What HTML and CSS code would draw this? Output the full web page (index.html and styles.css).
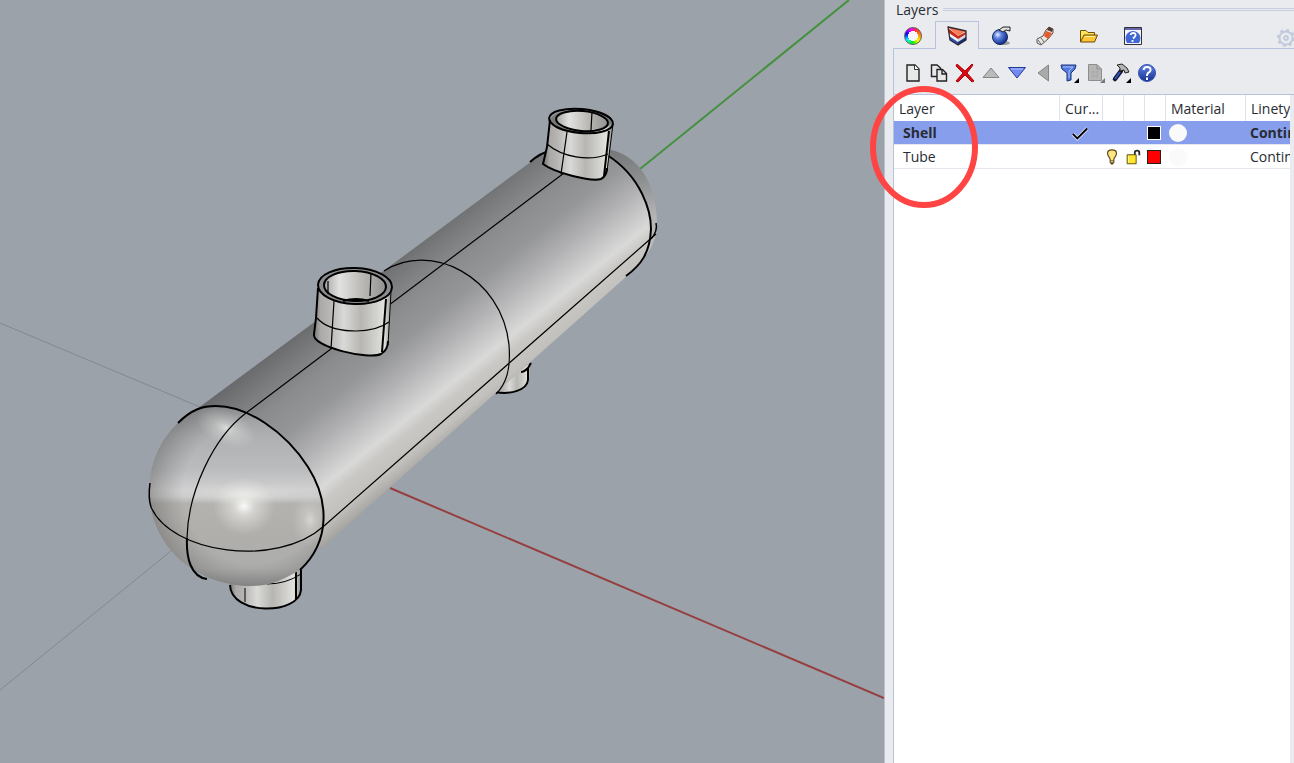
FILE: index.html
```html
<!DOCTYPE html>
<html lang="en">
<head>
<meta charset="utf-8">
<meta name="viewport" content="width=device-width, initial-scale=1">
<title>Layers</title>
<link rel="stylesheet" href="styles.css">
</head>
<body>
<main class="app">
  <section class="viewport" aria-label="Perspective viewport">
    <svg class="scene" viewBox="0 0 884 763" preserveAspectRatio="xMidYMid slice" role="img" aria-label="Shell with four nozzles">
      <defs>
        <linearGradient id="body" gradientUnits="userSpaceOnUse" x1="0" y1="568" x2="117" y2="714">
          <stop offset="0" stop-color="#68696b"/><stop offset=".1" stop-color="#77787a"/>
          <stop offset=".25" stop-color="#8b8c8e"/><stop offset=".4" stop-color="#959698"/>
          <stop offset=".55" stop-color="#b1b1b3"/><stop offset=".66" stop-color="#c8c8c9"/>
          <stop offset=".74" stop-color="#d9d9d8"/><stop offset=".8" stop-color="#c9c8c5"/>
          <stop offset=".9" stop-color="#c1c0bc"/><stop offset="1" stop-color="#a09f9c"/>
        </linearGradient>
        <linearGradient id="dome" x1="0" y1="0" x2="0" y2="1">
          <stop offset="0" stop-color="#97989a"/><stop offset=".16" stop-color="#aeafb1"/>
          <stop offset=".35" stop-color="#bbbcbe"/><stop offset=".46" stop-color="#cfcfd0"/>
          <stop offset=".5" stop-color="#cbcbca"/><stop offset=".54" stop-color="#b3b2af"/>
          <stop offset=".7" stop-color="#b0afac"/><stop offset=".9" stop-color="#adadac"/>
          <stop offset="1" stop-color="#949495"/>
        </linearGradient>
        <radialGradient id="edge" cx=".58" cy=".48" r=".6">
          <stop offset=".65" stop-color="#555" stop-opacity="0"/><stop offset="1" stop-color="#444" stop-opacity=".4"/>
        </radialGradient>
        <radialGradient id="glow">
          <stop offset="0" stop-color="#fff" stop-opacity=".95"/><stop offset=".35" stop-color="#f4f4f0" stop-opacity=".5"/>
          <stop offset="1" stop-color="#eee" stop-opacity="0"/>
        </radialGradient>
        <linearGradient id="farcap" gradientUnits="userSpaceOnUse" x1="625" y1="150" x2="645" y2="245">
          <stop offset="0" stop-color="#77797b"/><stop offset=".35" stop-color="#8f9092"/>
          <stop offset=".7" stop-color="#b2b2b3"/><stop offset="1" stop-color="#bdbdbb"/>
        </linearGradient>
        <linearGradient id="pipe">
          <stop offset="0" stop-color="#777779"/><stop offset=".08" stop-color="#aaa9a7"/>
          <stop offset=".2" stop-color="#b7b6b4"/><stop offset=".38" stop-color="#d9d9d7"/>
          <stop offset=".6" stop-color="#b7b6b2"/><stop offset=".8" stop-color="#d2d2cf"/>
          <stop offset=".9" stop-color="#e2e2df"/><stop offset="1" stop-color="#8b8b89"/>
        </linearGradient>
        <linearGradient id="bore">
          <stop offset="0" stop-color="#a6a5a3"/><stop offset=".25" stop-color="#e2e2e0"/>
          <stop offset=".6" stop-color="#bcbbb7"/><stop offset="1" stop-color="#929292"/>
        </linearGradient>
        <clipPath id="domeclip"><path d="M178 423C192 409 203 406 216 406C247 406 285 431 308 467C329 500 331 541 300 570C275 584 267 586 245 586C187 582 149 540 149 490C150 462 160 440 178 423Z"/></clipPath>
      </defs>
      <rect width="884" height="763" fill="#9ca2aa"/>
      <g fill="none">
        <path d="M0 323L200 407M0 690L171 551" stroke="#85878d"/>
        <path d="M390 488L884 698" stroke="#963f40" stroke-width="2"/>
        <path d="M640 169L849 0" stroke="#44913f" stroke-width="2"/>
      </g>
      <!-- lower nozzles -->
      <path d="M496 385L531 363L529 379Q528 391 512 393Q503 394 496 391Z" fill="url(#pipe)"/>
      <path d="M531 363L528 368L528 380C527 390 511 395 495 392M528 368Q524 372 521 372" fill="none" stroke="#000" stroke-width="2"/>
      <path d="M230 582L231 590C236 613 295 614 301 591L301 570Z" fill="url(#pipe)"/>
      <path d="M230 585C231 616 299 615 301 590V570M296 572V600" fill="none" stroke="#000" stroke-width="2"/>
      <path d="M245 588V602M267 584Q286 584 301 574" fill="none" stroke="#000"/>
      <!-- far head and cylindrical body -->
      <path d="M608 149C648 157 657 198 657 225C657 239 649 257 628 275L590 250Z" fill="url(#farcap)"/>
      <path d="M178 423L532 161C548 147 565 145 605 153C630 168 650 202 652 231C651 252 642 265 628 275L322 548L240 520Z" fill="url(#body)"/>
      <g fill="none" stroke="#000">
        <path d="M246 413L564 173M324 526L656 234M384 271C430 241 502 276 509 345C511 370 506 384 496 394" stroke-width="1.200"/>
        <path d="M530 162Q540 153 552 150M607 155C642 177 651 212 651 229C650 253 641 265 626 276" stroke-width="2"/>
        <path d="M656 223Q658 231 651 239" stroke-width="1.500"/>
      </g>
      <!-- near head -->
      <g clip-path="url(#domeclip)">
        <rect x="149" y="406" width="180" height="181" fill="url(#dome)"/>
        <rect x="149" y="406" width="180" height="181" fill="url(#edge)"/>
        <ellipse cx="226" cy="428" rx="32" ry="17" fill="url(#glow)" opacity=".6" transform="rotate(25 226 428)"/>
        <ellipse cx="244" cy="506" rx="31" ry="29" fill="url(#glow)"/>
        <ellipse cx="244" cy="494" rx="80" ry="12" fill="url(#glow)" opacity=".35"/>
        <ellipse cx="310" cy="520" rx="18" ry="27" fill="url(#glow)" opacity=".5"/>
      </g>
      <g fill="none" stroke="#000">
        <path d="M246 413C213 438 188 492 187 538M151 507C171 553 276 569 324 526" stroke-width="1.200"/>
        <path d="M178 423C192 409 203 406 216 406C247 406 285 431 308 467C329 500 331 541 300 570M187 538C186 558 191 577 207 579" stroke-width="2"/>
        <path d="M150 483Q148 498 151 507" stroke-width="1.500"/>
      </g>
      <!-- upper nozzles -->
      <g>
        <path d="M318 287L314 337C327 349 370 361 383 353Q388 350 388 342L392 290Z" fill="url(#pipe)"/>
        <ellipse cx="355" cy="286" rx="36" ry="18" fill="#8b8c8d"/>
        <ellipse cx="355" cy="286" rx="31" ry="15" fill="url(#bore)"/>
        <g fill="none" stroke="#000">
          <path d="M334 301L331 349M317 318C331 334 371 335 389 322M371 273L370 296M328 281V294" stroke-width="1.200"/>
          <g stroke-width="2">
            <ellipse cx="355" cy="286" rx="37" ry="18" transform="rotate(2 355 286)"/>
            <ellipse cx="355" cy="286" rx="31" ry="15" transform="rotate(2 355 286)"/>
            <path d="M318 288L316 318L314 334C311 347 369 360 381 354Q388 350 388 341M386 299L382 352M343 301Q356 297 369 301"/>
          </g>
          <path d="M391 292L388 345"/>
        </g>
      </g>
      <g>
        <path d="M550 120L544 166C562 176 590 181 602 178Q607 176 607 169L613 124Z" fill="url(#pipe)"/>
        <ellipse cx="581" cy="121" rx="31" ry="12" fill="#777879"/>
        <ellipse cx="582" cy="121" rx="26" ry="10" fill="url(#bore)"/>
        <g fill="none" stroke="#000">
          <path d="M567 132L561 174M547 144C562 157 589 162 608 154M592 112L591 130" stroke-width="1.200"/>
          <g stroke-width="2">
            <ellipse cx="581" cy="121" rx="32" ry="12" transform="rotate(5 581 121)"/>
            <ellipse cx="582" cy="121" rx="26" ry="10" transform="rotate(5 582 121)"/>
            <path d="M550 120L547 147L543 164C555 173 591 182 601 179Q607 176 607 168M609 131L604 176"/>
          </g>
          <path d="M613 124L607 171"/>
        </g>
      </g>
    </svg>
  </section>

  <aside class="panel">
    <header class="panel-head"><h1 class="title">Layers</h1><span class="grip"></span></header>
    <nav class="tabs" aria-label="Panels">
      <button class="tab" aria-label="Properties"><span class="wheel"></span></button>
      <button class="tab tab-active" aria-label="Layers"><svg class="icon" viewBox="0 0 20 20"><path d="M1 1L11 10V19L3 14Z" fill="#f4f4f6"/><path d="M11 10L19 6V14L11 19Z" fill="#d6d8e4"/><path d="M1 2L11 10L19 6V8L11 13L2 7Z" fill="#c22b1a"/><path d="M2 10L11 16V19L3 14Z" fill="#2a50b4"/><path d="M11 16L19 11V14L11 19Z" fill="#142c78"/><path d="M1 1L19 5L11 10Z" fill="#fb7d55"/><path d="M1 1L19 5V14L11 19L3 14Z" fill="none" stroke="#33262c" stroke-width="1.300" stroke-linejoin="round"/></svg></button>
      <button class="tab" aria-label="Rendering"><svg class="icon" viewBox="0 0 20 20"><defs><radialGradient id="ball" cx=".35" cy=".35" r=".65"><stop stop-color="#e7f4ff"/><stop offset=".35" stop-color="#6187e4"/><stop offset="1" stop-color="#12308c"/></radialGradient></defs><ellipse cx="12" cy="17" rx="7" ry="2" fill="#9b9ba0"/><circle cx="9" cy="11" r="7.500" fill="url(#ball)" stroke="#19275b"/><path d="M8 4L12 1H19V5L15 4L12 6Z" fill="#ddd" stroke="#222"/></svg></button>
      <button class="tab" aria-label="Materials"><svg class="icon" viewBox="0 0 20 20"><path d="M14 1L18 3V7L13 13L6 19L2 17V13L8 10L11 4Z" fill="#eae6e3" stroke="#5b514d"/><path d="M11 5L17 7L13 13L9 10Z" fill="#e65b28"/><path d="M14 1L18 3L17 6L12 4Z" fill="#54382f"/><path d="M6 12L9 16M3 14L6 18" stroke="#666"/></svg></button>
      <button class="tab" aria-label="Libraries"><svg class="icon" viewBox="0 0 20 20"><path d="M1.500 16V4.500H7L9 6.500H15.500V9" fill="#ffe45b" stroke="#6e5109"/><path d="M1.500 16L5 9H18.500L15.500 16Z" fill="#ffc638" stroke="#694900"/><path d="M6 10.500H16" stroke="#fff2a0"/></svg></button>
      <button class="tab" aria-label="Help panel"><svg class="icon" viewBox="0 0 20 20"><path d="M1.500 1.500H18.500V18.500H1.500Z" fill="#f5f5fa" stroke="#303039"/><path d="M2 2H18V4H2Z" fill="#6666af"/><path d="M4 17C0 10 5 5 10 5S20 10 16 17Z" fill="#4267d4"/><path d="M7.500 9Q8 7 10 7Q13 7 12.500 9.500Q12 11 10 12.500M9.500 14V16" fill="none" stroke="#fff" stroke-width="1.800"/></svg></button>
      <button class="gear" aria-label="Panel options"><svg class="icon" viewBox="0 0 20 20"><g fill="none" stroke="#c0cadd"><circle cx="10" cy="10" r="6.500" stroke-width="1.800"/><circle cx="10" cy="10" r="2" stroke-width="1.800"/><circle cx="10" cy="10" r="8" stroke-width="2" stroke-dasharray="3.140 3.140"/></g></svg></button>
    </nav>
    <div class="content">
      <div class="toolbar" role="toolbar" aria-label="Layer tools">
        <button class="tool" aria-label="New layer"><svg class="icon" viewBox="0 0 20 20"><path d="M4 2H12L16 6V18H4Z" fill="#e8e8e8" stroke="#222" stroke-width="1.400"/><path d="M11.500 2V6.500H16" fill="#fff" stroke="#333"/></svg></button>
        <button class="tool" aria-label="New sublayer"><svg class="icon" viewBox="0 0 20 20"><g fill="#e8e8e8" stroke="#222" stroke-width="1.400"><path d="M2.500 2H8L11.500 5V13.500H2.500Z"/><path d="M8 6.500H13.500L17.500 10.500V18H8Z"/><path d="M13 7V11H17" fill="none"/></g></svg></button>
        <button class="tool" aria-label="Delete"><svg class="icon" viewBox="0 0 20 20"><path d="M2 1L10 8L17 1L18 2L12 10L19 18L17 19L10 12L3 19L1 18L8 10L1 3Z" fill="#d90b13" stroke="#ae050b"/></svg></button>
        <button class="tool" aria-label="Move up"><svg class="icon" viewBox="0 0 20 20"><path d="M2 14.500L10 5L18 14.500Z" fill="#bbb" stroke="#858585"/></svg></button>
        <button class="tool" aria-label="Move down"><svg class="icon" viewBox="0 0 20 20"><path d="M1.500 4.500H18.500L10 15Z" fill="#718bf2" stroke="#243a91"/><path d="M4 6H16" stroke="#acbfff"/></svg></button>
        <button class="tool" aria-label="Move left"><svg class="icon" viewBox="0 0 20 20"><path d="M5 10L15.500 2V18Z" fill="#aaa" stroke="#858585"/></svg></button>
        <button class="tool" aria-label="Filter"><svg class="icon" viewBox="0 0 20 20"><path d="M2 2H17L16 6L12 10V17L8 18V10L3 6Z" fill="#5479dd" stroke="#1d347d"/><path d="M4 4H14L10 8V15" fill="none" stroke="#a9c3ff"/><path d="M20 15V20H15Z"/></svg></button>
        <button class="tool" aria-label="Layer state"><svg class="icon" viewBox="0 0 20 20"><path d="M3.500 1.500H12L16.500 6V17.500H3.500Z" fill="#b6b6b6" stroke="#8d8d8d"/><path d="M12 2V6H16" fill="none" stroke="#8d8d8d"/><path d="M6 9H14M6 13H14M8 7V15M12 7V15" fill="none" stroke="#aaa"/><path d="M20 15V20H15Z" fill="#777"/></svg></button>
        <button class="tool" aria-label="Tools"><svg class="icon" viewBox="0 0 20 20"><path d="M10 8L4 16" stroke="#10172e" stroke-width="4.500" stroke-linecap="round"/><path d="M9 9L4 16" stroke="#3156bd" stroke-width="2"/><path d="M6 2L11 1L16 5L18 9L14 10L13 7L9 8L9 5Z" fill="#b5b5b5" stroke="#222"/><path d="M20 15V20H15Z"/></svg></button>
        <button class="tool" aria-label="Help"><svg class="icon" viewBox="0 0 20 20"><defs><linearGradient id="help" x2="0" y2="1"><stop stop-color="#5e83ee"/><stop offset="1" stop-color="#18318d"/></linearGradient></defs><circle cx="10" cy="10" r="8.500" fill="url(#help)" stroke="#354fb0"/><path d="M6.500 7Q7 4 10 4Q14 4 13.500 7.500Q13 9 11 10Q10 11 10 13M10 14.500V17" fill="none" stroke="#fff" stroke-width="2"/></svg></button>
      </div>
      <div class="list">
        <table class="layers">
          <colgroup><col class="col-name"><col class="col-current"><col class="col-mark"><col class="col-mark"><col class="col-mark"><col class="col-material"><col></colgroup>
          <thead><tr><th>Layer</th><th>Cur...</th><th></th><th></th><th></th><th>Material</th><th>Linetype</th></tr></thead>
          <tbody>
            <tr class="selected"><td class="name">Shell</td><td class="mark"><svg class="icon" viewBox="0 0 20 20"><path d="M2 11L7 16L18 5" fill="none" stroke="#dce4ff" stroke-width="4"/><path d="M2 11L7 16L18 5" fill="none" stroke="#000" stroke-width="2"/></svg></td><td></td><td></td><td class="mark"><span class="swatch swatch-black"></span></td><td><span class="material"></span></td><td>Continuous</td></tr>
            <tr><td class="name">Tube</td><td></td><td class="mark"><svg class="icon" viewBox="0 0 20 20"><path d="M8 13C8 11 5 9 5 6Q5 2 10 2Q15 2 15 6C15 9 12 11 12 13V16L10 18L8 16Z" fill="#ffe582" stroke="#5b4816" stroke-width="1.300"/><path d="M8 14H12M8 16H12" stroke="#6c6449"/></svg></td><td class="mark"><svg class="icon" viewBox="0 0 20 20"><path d="M12 8V5Q12 3 14.500 3Q17 3 17 5V8" fill="none" stroke="#292923" stroke-width="2"/><path d="M3.500 7.500H13.500V17.500H3.500Z" fill="#ffe52c" stroke="#4f4300"/><path d="M5 9V16" stroke="#fff7a6"/></svg></td><td class="mark"><span class="swatch swatch-red"></span></td><td><span class="material"></span></td><td>Continuous</td></tr>
          </tbody>
        </table>
      </div>
    </div>
    <svg class="callout" viewBox="0 0 108 124" aria-hidden="true"><ellipse cx="54" cy="61" rx="51" ry="58" fill="none" stroke="#ff4444" stroke-width="6"/></svg>
  </aside>
</main>
</body>
</html>
```
FILE: styles.css
```css
* { box-sizing: border-box; }
body { margin: 0; font-family: "Open Sans", "Noto Sans", sans-serif; font-size: 14px; color: #292c33; }
button { border: 0; padding: 0; background: none; font: inherit; }
.app { display: flex; height: 100vh; overflow: hidden; }
.viewport { flex: 1; min-width: 0; background: #9ca2aa; }
.scene { display: block; width: 100%; height: 100%; }
.panel { position: relative; display: flex; flex-direction: column; flex: 0 0 410px; padding-left: 8px; background: #e9ebef; border-left: 1px solid #b9c1d2; }
.panel-head { display: flex; align-items: center; height: 21px; padding: 0 0 2px 3px; gap: 5px; }
.title { margin: 0; font-size: 14px; line-height: 19px; font-weight: 400; }
.grip { flex: 1; height: 3px; border-top: 1px solid #c6cee2; border-bottom: 1px solid #c6cee2; }
.tabs { display: flex; height: 28px; margin: 0 0 -1px -2px; position: relative; }
.tab { display: flex; align-items: center; justify-content: center; width: 44px; border: 1px solid transparent; border-bottom: 0; }
.tab-active { background: #e9ebef; border-color: #b7c3dc; }
.gear { display: flex; align-items: center; margin: 6px -2px 0 auto; }
.icon { display: block; width: 20px; height: 20px; }
.wheel { width: 18px; height: 18px; border: 1px solid #606060; border-radius: 50%; background: radial-gradient(circle, #f7f7f9 0 5px, transparent 5px), conic-gradient(from 30deg, #f33, #f80, #ff0, #0e0, #0ff, #00f, #f0f, #f33); }
.content { display: flex; flex-direction: column; flex: 1; min-height: 0; border: 1px solid #b7c3dc; border-width: 1px 0 0 1px; }
.toolbar { display: flex; align-items: center; height: 46px; padding: 2px 0 0 6px; border-bottom: 1px solid #b7c3dc; }
.tool { display: flex; justify-content: center; width: 26px; }
.list { flex: 1; margin-right: 4px; overflow: hidden; background: #fff; }
.layers { width: 100%; table-layout: fixed; border-collapse: separate; border-spacing: 0; }
.col-name { width: 166px; }
.col-current { width: 43px; }
.col-mark { width: 21px; }
.col-material { width: 80px; }
th { height: 26px; padding: 0 0 0 5px; border-right: 1px solid #dfe3ec; font-weight: 400; text-align: left; white-space: nowrap; overflow: hidden; }
th:last-child { border-right: 0; }
td { height: 24px; padding: 0 0 0 4px; border-bottom: 1px solid #e6e8f0; white-space: nowrap; overflow: hidden; }
td.name { padding-left: 9px; }
td.mark { padding: 0 3px 0 0; }
.mark > .icon { width: 18px; height: 18px; margin: 0 auto; }
.swatch { display: block; width: 14px; height: 14px; margin: 0 auto; border: 1px solid #202020; }
.selected { background: #879eed; font-weight: 700; }
.swatch-black { background: #000; border-color: #fff; }
.swatch-red { background: #f00; }
.material { display: block; width: 18px; height: 18px; margin-left: -1px; border-radius: 50%; background: #fafafa; }
.callout { position: absolute; left: -15px; top: 86px; width: 108px; height: 124px; }
```
